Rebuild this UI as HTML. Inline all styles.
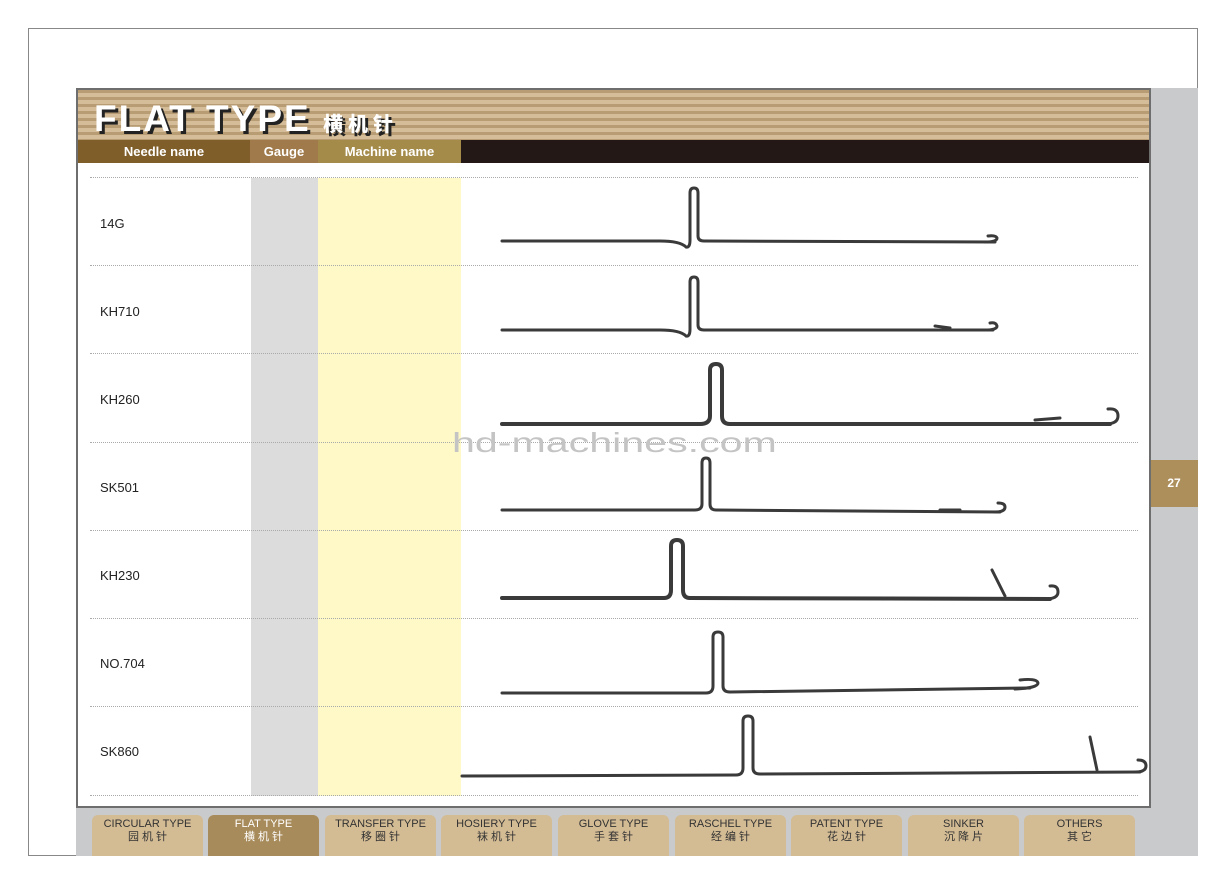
<!DOCTYPE html>
<html><head><meta charset="utf-8"><style>
body{margin:0;width:1228px;height:884px;background:#fff;position:relative;overflow:hidden;font-family:"Liberation Sans","Noto Sans CJK SC",sans-serif}
.abs{position:absolute}
.frame{left:28px;top:28px;width:1170px;height:828px;border:1px solid #888;box-sizing:border-box}
.gr{background:#c9cacb}
.panel{left:76px;top:88px;width:1075px;height:720px;border:2px solid #6e6e6e;box-sizing:border-box;background:#fff;overflow:hidden}
.stripes{left:0;top:0;width:1075px;height:50px;background:repeating-linear-gradient(#b89c74 0 3px,#d4bd98 3px 7px)}
.hdr{top:50px;height:23px;color:#fff;font-weight:bold;font-size:13px;line-height:23px;text-align:center}
.tab{top:815px;width:111px;height:41px;border-radius:6px 6px 0 0;background:#d3bb94;text-align:center;font-size:11px;color:#333;line-height:13px;padding-top:3px;box-sizing:border-box}
.dot{left:12px;width:1048px;border-top:1px dotted #aaa}
.lbl{left:22px;font-size:13px;color:#222}
</style></head><body>
<div class="abs frame"></div>
<div class="abs gr" style="left:1150px;top:88px;width:48px;height:768px"></div>
<div class="abs gr" style="left:76px;top:807px;width:1122px;height:49px"></div>
<div class="abs" style="left:1150px;top:460px;width:48px;height:47px;background:#ad8f5b;color:#fff;font-weight:bold;font-size:12px;line-height:47px;text-align:center">27</div>
<div class="abs panel">
 <div class="abs stripes"></div>
 <div class="abs" style="left:16px;top:8px;font-size:37px;font-weight:900;color:#fff;letter-spacing:2px;text-shadow:3px 3px 0 #222;font-family:'Liberation Sans',sans-serif;white-space:nowrap">FLAT TYPE <span style="font-size:20px;letter-spacing:5px;font-family:'Noto Sans CJK SC',sans-serif">横机针</span></div>
 <div class="abs hdr" style="left:0;width:172px;background:#7f5e2a">Needle name</div>
 <div class="abs hdr" style="left:172px;width:68px;background:#a07a4a">Gauge</div>
 <div class="abs hdr" style="left:240px;width:143px;background:#a48b4a">Machine name</div>
 <div class="abs hdr" style="left:383px;width:692px;background:#231815"></div>
 <div class="abs" style="left:173px;top:88px;width:67px;height:618px;background:#dcdcdc"></div>
 <div class="abs" style="left:240px;top:88px;width:143px;height:618px;background:#fef9c6"></div>
 <div class="abs dot" style="top:87px"></div><div class="abs dot" style="top:175px"></div><div class="abs dot" style="top:263px"></div><div class="abs dot" style="top:352px"></div><div class="abs dot" style="top:440px"></div><div class="abs dot" style="top:528px"></div><div class="abs dot" style="top:616px"></div><div class="abs dot" style="top:705px"></div>
 <div class="abs lbl" style="top:126px">14G</div>
 <div class="abs lbl" style="top:214px">KH710</div>
 <div class="abs lbl" style="top:302px">KH260</div>
 <div class="abs lbl" style="top:390px">SK501</div>
 <div class="abs lbl" style="top:478px">KH230</div>
 <div class="abs lbl" style="top:566px">NO.704</div>
 <div class="abs lbl" style="top:654px">SK860</div>
 <div class="abs" style="left:374px;top:337px;font-size:28px;color:#c4c4c4;transform-origin:0 0;transform:scaleX(1.47);white-space:nowrap">hd-machines.com</div>
</div>
<svg class="abs" style="left:0;top:0" width="1228" height="884" fill="none" stroke="#3a3a3a" stroke-width="3" stroke-linecap="round">
<path d="M502 241 L660 241 Q680 241 686 247 Q690 248 690 240 L690 193 Q690 188 694 188 Q698 188 698 193 L698 236 Q698 241 704 241 L995 242"/><path d="M985 242 Q997 242 997 238 Q996 235 988 236"/>
<path d="M502 330 L660 330 Q680 330 686 336 Q690 337 690 329 L690 282 Q690 277 694 277 Q698 277 698 282 L698 325 Q698 330 704 330 L993 330"/><path d="M985 330 Q997 330 997 326 Q996 322 990 323 M935 326 L950 328"/>
<path d="M502 424 L700 424 Q710 424 710 416 L710 370 Q710 364 716 364 Q722 364 722 370 L722 416 Q722 424 730 424 L1110 424" stroke-width="4"/><path d="M1105 424 Q1118 424 1118 416 Q1118 408 1108 409 M1035 420 L1060 418"/>
<path d="M502 510 L695 510 Q702 510 702 504 L702 463 Q702 458 706 458 Q710 458 710 463 L710 504 Q710 510 716 510 L1000 512"/><path d="M995 512 Q1005 512 1005 507 Q1005 503 998 503 M940 510 L960 510"/>
<path d="M502 598 L664 598 Q671 598 671 590 L671 546 Q671 540 677 540 Q683 540 683 546 L683 590 Q683 598 690 598 L1050 599" stroke-width="4"/><path d="M1045 599 Q1058 599 1058 592 Q1058 585 1050 586 M992 570 L1005 596"/>
<path d="M502 693 L706 693 Q713 693 713 686 L713 637 Q713 632 718 632 Q723 632 723 637 L723 686 Q723 692 730 692 L1030 688"/><path d="M1015 689 Q1038 688 1038 683 Q1037 678 1020 680"/>
<path d="M462 776 L736 775 Q743 775 743 768 L743 721 Q743 716 748 716 Q753 716 753 721 L753 768 Q753 774 760 774 L1140 772"/><path d="M1135 772 Q1146 772 1146 766 Q1146 760 1138 760 M1090 737 L1097 770"/>
</svg>
<div class="abs tab" style="left:92px">CIRCULAR TYPE<br>园 机 针</div>
<div class="abs tab" style="left:208px;background:#a88b5b;color:#fff">FLAT TYPE<br>横 机 针</div>
<div class="abs tab" style="left:325px">TRANSFER TYPE<br>移 圈 针</div>
<div class="abs tab" style="left:441px">HOSIERY TYPE<br>袜 机 针</div>
<div class="abs tab" style="left:558px">GLOVE TYPE<br>手 套 针</div>
<div class="abs tab" style="left:675px">RASCHEL TYPE<br>经 编 针</div>
<div class="abs tab" style="left:791px">PATENT TYPE<br>花 边 针</div>
<div class="abs tab" style="left:908px">SINKER<br>沉 降 片</div>
<div class="abs tab" style="left:1024px">OTHERS<br>其 它</div>
</body></html>
